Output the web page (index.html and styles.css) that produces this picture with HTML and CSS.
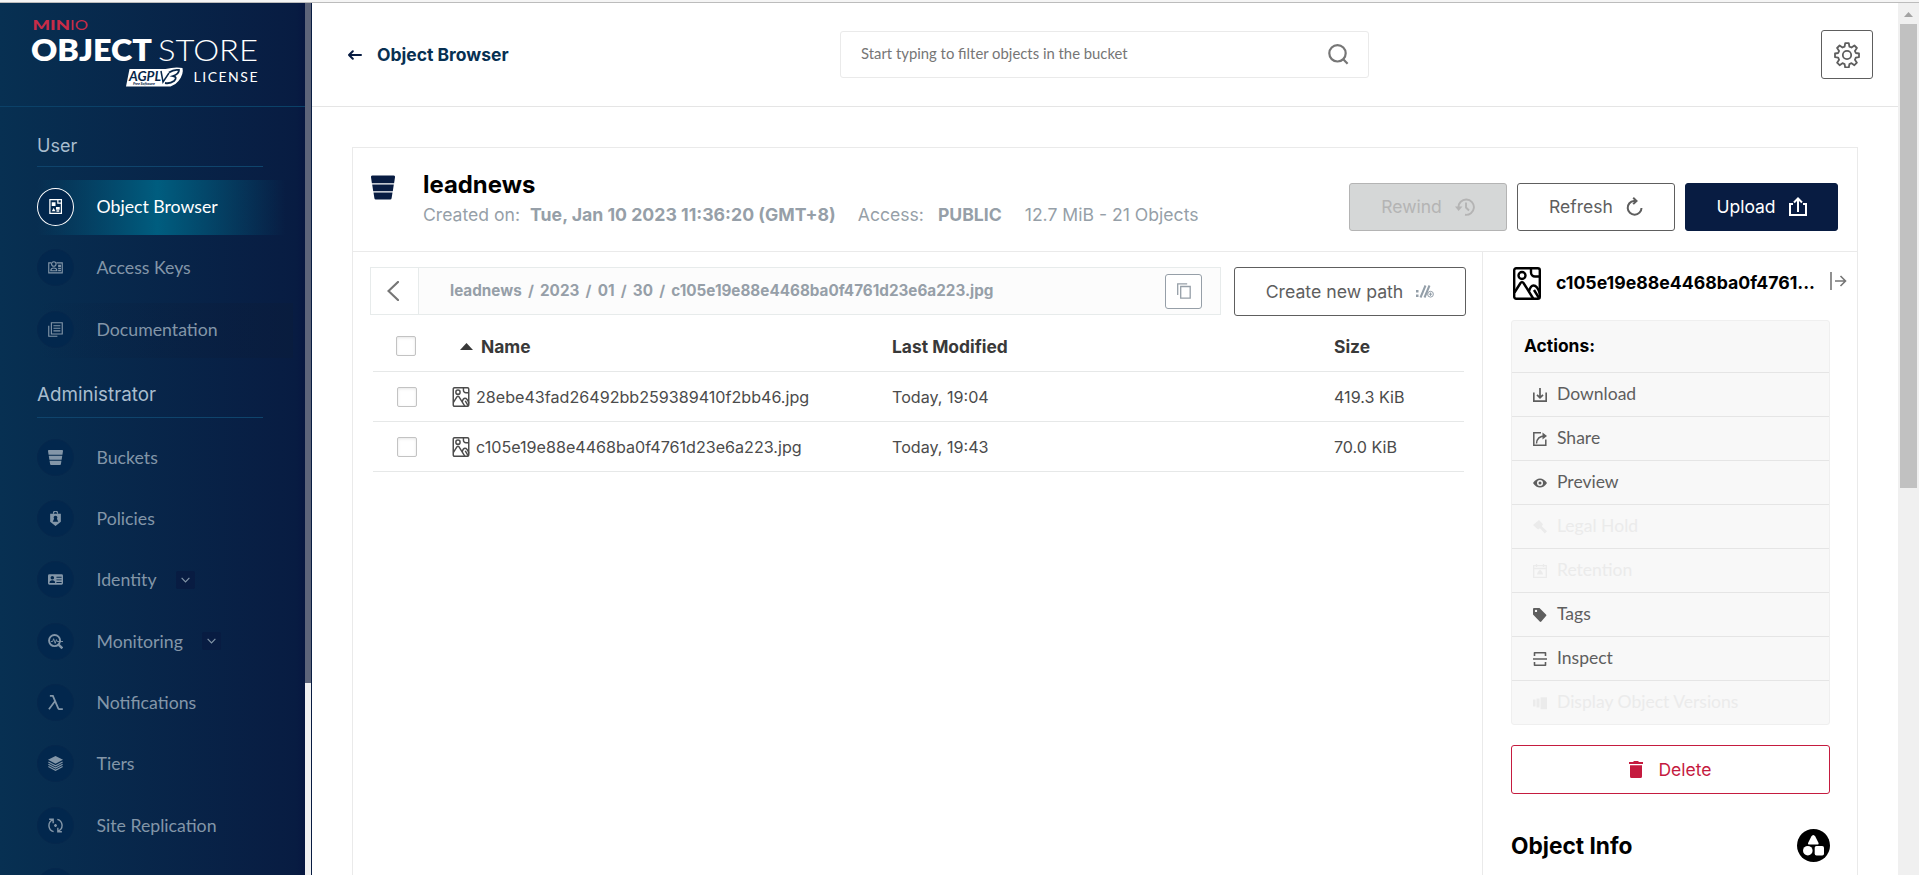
FILE: index.html
```html
<!DOCTYPE html>
<html lang="en">
<head>
  <meta charset="UTF-8" />
  <meta name="viewport" content="width=device-width, initial-scale=1.0"/>
  <title>MinIO Console</title>
  <link rel="stylesheet" href="styles.css">
</head>
<body>

  <!-- Shared icons -->
  <svg class="sprite" xmlns="http://www.w3.org/2000/svg">
    <symbol id="i-bucket" viewBox="0 0 24 24">
      <path fill="currentColor" d="M1.5 0h21A1.5 1.5 0 0 1 24 1.700L23.100 7.700H.9L0 1.700A1.500 1.500 0 0 1 1.500 0zM1.200 9h21.600l-1 6.700H2.200zM2.500 17h19l-.9 5.700A1.500 1.500 0 0 1 19.200 24H4.800a1.500 1.500 0 0 1-1.400-1.300z"/>
    </symbol>
    <symbol id="i-image" viewBox="0 0 28 33">
      <g fill="none" stroke="currentColor" stroke-width="2.400" stroke-linejoin="round">
        <rect x="1.200" y="1.200" width="25.600" height="30.600" rx="2"/>
        <circle cx="9" cy="8.500" r="3.500"/>
        <path d="M18 1v4.500a4 4 0 0 0 4 4h5M1.500 25.500l6-9.500q1.500-1.800 3 0L20.500 32M16 24.500q1.500-6 4.500-6 4 0 6.500 8.500M21 23l5 8"/>
      </g>
    </symbol>
    <symbol id="i-chevron" viewBox="0 0 10 6">
      <path fill="none" stroke="currentColor" stroke-width="1.300" d="M.7.700L5 5 9.300.700"/>
    </symbol>
  </svg>

  <div class="topline"></div>
  <div class="app">

    <!-- Sidebar -->
    <aside class="sidebar">
      <div class="menu">
        <div class="brand">
          <svg class="logo" width="226" height="70" viewBox="0 0 226 70">
            <text class="logo-min" x="0.500" y="13.300" textLength="37.500" lengthAdjust="spacingAndGlyphs">MIN</text>
            <text class="logo-io" x="38" y="13.300" textLength="18" lengthAdjust="spacingAndGlyphs">IO</text>
            <text class="logo-object" x="-1" y="44" textLength="121" lengthAdjust="spacingAndGlyphs">OBJECT</text>
            <text class="logo-store" x="126" y="44" textLength="100" lengthAdjust="spacingAndGlyphs">STORE</text>
            <path fill="#fff" d="M97.500 52h36q10-2.500 17-1 1.500 6-4 13-3 4-8 5.500H94z"/>
            <text class="logo-agpl" x="97" y="64" textLength="32" lengthAdjust="spacingAndGlyphs">AGPL</text>
            <text class="logo-free" x="101" y="68.300" textLength="22">Free Software</text>
            <path fill="none" stroke="#082749" stroke-width="1.500" d="M129 54l2 11 6-9"/>
            <path fill="none" stroke="#082749" stroke-width="1.800" d="M137 55.500q5-3.500 10-2.500 0 4-6 6 5 1 1 5-4 3-9 2"/>
            <text class="logo-license" x="161.500" y="65" textLength="64">LICENSE</text>
          </svg>
        </div>

        <div class="group-label">User</div>
        <a class="item active">
          <span class="bubble"><svg viewBox="0 0 16 16"><path fill="none" stroke="currentColor" stroke-width="1.300" d="M2 .7h12.300v14.600H2zM10.500 1v3.500h3.800"/><path fill="currentColor" d="M4 3.500h4v4H4zM8.500 8.500h4v3h-4zM4 13l2-3.500L8 13zM9 12h3v1.500H9z"/></svg></span>
          Object Browser
        </a>
        <a class="item">
          <span class="bubble"><svg viewBox="0 0 16 16"><g fill="none" stroke="currentColor" stroke-width="1.200"><path d="M3.500 3H.8v10.700h14.400V3H9"/><circle cx="6.200" cy="4.300" r="2.400"/><path d="M3 11.500q0-3 3.200-3t3.200 3z"/></g><path fill="currentColor" d="M10.800 5h3v2.500h-3zM10.800 8.300h3v1.500h-3zM10.800 10.600h3V12h-3z"/></svg></span>
          Access Keys
        </a>
        <a class="item hovered">
          <span class="bubble"><svg viewBox="0 0 16 16"><path fill="none" stroke="currentColor" stroke-width="1.200" d="M3.600.8h11.600v12H3.600zM.8 4v11.200H10M5.800 4h7.400M5.800 6.700h7.400M5.800 9.500h7.400"/></svg></span>
          Documentation
        </a>

        <div class="group-label admin">Administrator</div>
        <a class="item">
          <span class="bubble"><svg><use href="#i-bucket"/></svg></span>
          Buckets
        </a>
        <a class="item">
          <span class="bubble"><svg viewBox="0 0 16 16"><path fill="none" stroke="currentColor" stroke-width="1.200" d="M5.800 3V2.400a2.200 2.200 0 0 1 4.400 0V3"/><path fill="currentColor" fill-rule="evenodd" d="M2.300 3h11.400v8.500L8 16l-5.700-4.500zM8 5a2 2 0 0 0-1.500 3.300L5 11.500h6L9.500 8.300A2 2 0 0 0 8 5z"/></svg></span>
          Policies
        </a>
        <a class="item">
          <span class="bubble"><svg viewBox="0 0 16 16"><path fill="currentColor" fill-rule="evenodd" d="M1.500 2.500h13A1.500 1.500 0 0 1 16 4v8a1.500 1.500 0 0 1-1.500 1.500h-13A1.500 1.500 0 0 1 0 12V4a1.500 1.500 0 0 1 1.500-1.500zM4.600 4.300a1.900 1.900 0 1 0 0 3.800 1.900 1.900 0 0 0 0-3.800zM1.600 11.700h6q0-3-3-3t-3 3zM9 6h5.500v-.9H9zm0 2.800h5.500v-.9H9zm0 2.800h5.500v-.9H9z"/></svg></span>
          Identity
          <span class="toggle"><svg width="9" height="6"><use href="#i-chevron"/></svg></span>
        </a>
        <a class="item">
          <span class="bubble"><svg viewBox="0 0 16 16"><circle cx="7" cy="7" r="5.900" fill="none" stroke="currentColor" stroke-width="2"/><path fill="none" stroke="currentColor" stroke-width="2.600" d="M11 11l4.300 4.300"/><path fill="none" stroke="currentColor" stroke-width="1" d="M3 8h2l1-3 1.700 5L9 6l.8 2H16"/></svg></span>
          Monitoring
          <span class="toggle"><svg width="9" height="6"><use href="#i-chevron"/></svg></span>
        </a>
        <a class="item">
          <span class="bubble"><svg viewBox="0 0 16 16"><path fill="none" stroke="currentColor" stroke-width="1.900" d="M2 .9h3.200l5.600 13.200q.4 1 1.400 1h3.600M7.600 6.300L1 15.200"/></svg></span>
          Notifications
        </a>
        <a class="item">
          <span class="bubble"><svg viewBox="0 0 16 16"><path fill="currentColor" d="M8 0l8 4-8 4.200L0 4z"/><path fill="none" stroke="currentColor" stroke-width="1.200" d="M.4 6.500L8 10.400l7.600-3.900M.4 8.900L8 12.800l7.600-3.900M.4 11.300L8 15.200l7.600-3.900"/></svg></span>
          Tiers
        </a>
        <a class="item">
          <span class="bubble"><svg viewBox="0 0 16 16"><path fill="none" stroke="currentColor" stroke-width="1.500" d="M6 14.600A6.700 6.700 0 0 1 5 2M1.200 1.300H5.500v4.300M10 1.400a6.700 6.700 0 0 1 1 12.600M14.800 14.700h-4.300v-4.300M6.500 8h3M8 6.500v3"/></svg></span>
          Site Replication
        </a>
        <a class="item">
          <span class="bubble"></span>
        </a>
      </div>
      <div class="menu-scroll"><div class="menu-thumb"></div></div>
    </aside>

    <!-- Main area -->
    <main class="main">
      <header class="page-header">
        <div class="back">
          <svg width="14" height="10" viewBox="0 0 14 10"><path fill="none" stroke="#081c42" stroke-width="2" stroke-linecap="round" stroke-linejoin="round" d="M4.800 1.200L1 5l3.800 3.800M1 5h12"/></svg>
          <span>Object Browser</span>
        </div>
        <div class="search">
          <span>Start typing to filter objects in the bucket</span>
          <svg width="21" height="21" viewBox="0 0 21 21"><g fill="none" stroke="#767676" stroke-width="2.200"><circle cx="9.500" cy="9.300" r="8.200"/><path d="M15 15l4.600 4.800"/></g></svg>
        </div>
        <button class="gear">
          <svg width="26" height="26" viewBox="0 0 26 26"><g fill="none" stroke="#5e5e5e" stroke-width="1.800" stroke-linejoin="round"><circle cx="13" cy="13" r="4.200"/><path d="M11.200 1.200h3.600l.6 3.400 2.100.9 2.900-2 2.500 2.500-2 2.900.9 2.100 3.200.5v3.700l-3.200.5-.9 2.100 2 2.900-2.500 2.500-2.900-2-2.100.9-.6 3.400h-3.600l-.6-3.400-2.100-.9-2.900 2-2.500-2.500 2-2.900-.9-2.100-3.200-.5v-3.700l3.200-.5.9-2.100-2-2.900 2.500-2.500 2.900 2 2.100-.9z"/></g></svg>
        </button>
      </header>

      <section class="card">
        <div class="bucket-head">
          <svg class="bucket-icon" width="24" height="25"><use href="#i-bucket"/></svg>
          <div class="bucket-info">
            <h1>leadnews</h1>
            <p><span>Created on:</span><b class="date">Tue, Jan 10 2023 11:36:20 (GMT+8)</b><span class="access">Access:</span><b class="public">PUBLIC</b><span class="usage">12.7 MiB - 21 Objects</span></p>
          </div>
          <div class="bucket-actions">
            <button class="btn disabled">Rewind
              <svg width="20" height="18" viewBox="0 0 20 18"><g fill="none" stroke="currentColor" stroke-width="1.900"><path d="M3.500 9.500a7.700 7.700 0 1 1 6.500 7.300M11 4.500v5l3 3"/></g><path fill="currentColor" d="M0 8.500h7.500L3.600 13z"/></svg>
            </button>
            <button class="btn">Refresh
              <svg width="17" height="19" viewBox="0 0 17 19"><g fill="none" stroke="currentColor" stroke-width="2"><path d="M9.500 3.900H8a6.900 6.900 0 1 0 7.500 7"/><path d="M7.200.8l3.300 3.100-3.300 3.200"/></g></svg>
            </button>
            <button class="btn primary">Upload
              <svg width="18" height="19" viewBox="0 0 18 19"><path fill="none" stroke="currentColor" stroke-width="2" d="M4 7H1v11h16V7h-3M9 15V2M5 5.500l4-4 4 4"/></svg>
            </button>
          </div>
        </div>

        <div class="card-body">
          <div class="objects">
            <div class="path-row">
              <div class="breadcrumb">
                <span class="up"><svg width="12" height="20" viewBox="0 0 12 20"><path fill="none" stroke="#767676" stroke-width="2.200" stroke-linecap="round" d="M11 1L1.500 10 11 19"/></svg></span>
                <span class="crumbs">leadnews<i>/</i>2023<i>/</i>01<i>/</i>30<i>/</i>c105e19e88e4468ba0f4761d23e6a223.jpg</span>
                <button class="copy"><svg width="14" height="16" viewBox="0 0 14 16"><path fill="none" stroke="currentColor" stroke-width="1.300" d="M.7 12V.8h9.500M3.700 3.500h9.500v11.600H3.700z"/></svg></button>
              </div>
              <button class="btn new-path">Create new path
                <svg width="18" height="13" viewBox="0 0 18 13"><g fill="none" stroke="#939ea8" stroke-width="2"><path d="M4.500 12.500L9.500.5M8.500 12.500L13.500.5"/><circle cx="14.500" cy="9.200" r="2.900" stroke-width="1"/><path stroke-width="1" d="M14.500 7.500v3.400M12.800 9.200h3.400"/></g><path fill="#939ea8" d="M0 5h2.500v2.500H0zM0 9.500h2.500V12H0z"/></svg>
              </button>
            </div>

            <div class="table">
              <div class="row head">
                <span class="check"></span>
                <span class="name"><svg width="13" height="7" viewBox="0 0 13 7"><path fill="#393939" d="M0 7L6.500 0 13 7z"/></svg>Name</span>
                <span>Last Modified</span>
                <span>Size</span>
              </div>
              <div class="row">
                <span class="check"></span>
                <span class="name"><svg width="18" height="20"><use href="#i-image"/></svg>28ebe43fad26492bb259389410f2bb46.jpg</span>
                <span>Today, 19:04</span>
                <span>419.3 KiB</span>
              </div>
              <div class="row">
                <span class="check"></span>
                <span class="name"><svg width="18" height="20"><use href="#i-image"/></svg>c105e19e88e4468ba0f4761d23e6a223.jpg</span>
                <span>Today, 19:43</span>
                <span>70.0 KiB</span>
              </div>
            </div>
          </div>

          <!-- Object details -->
          <aside class="details">
            <div class="details-head">
              <svg width="28" height="33"><use href="#i-image"/></svg>
              <strong>c105e19e88e4468ba0f4761...</strong>
              <svg class="collapse" width="17" height="18" viewBox="0 0 17 18"><path fill="none" stroke="#767676" stroke-width="1.600" d="M1 0v18M5 9h10.500M10.500 4l5 5-5 5"/></svg>
            </div>

            <ul class="actions">
              <li class="title">Actions:</li>
              <li><svg viewBox="0 0 14 14"><path fill="none" stroke="currentColor" stroke-width="1.700" d="M.8 4.500v8.700h12.400V4.500M7 0v9.500M4 6.800l3 3 3-3"/></svg>Download</li>
              <li><svg viewBox="0 0 14 14"><path fill="none" stroke="currentColor" stroke-width="1.500" d="M8 .8H.8v12.400h12V7.500M3.500 11.500q.5-7.500 8.500-7.500"/><path fill="currentColor" d="M9.500.5L14 4 9.500 7.500z"/></svg>Share</li>
              <li><svg viewBox="0 0 14 14"><path fill="currentColor" fill-rule="evenodd" d="M0 7q3-4.500 7-4.500T14 7q-3 4.500-7 4.500T0 7zm7-3a3 3 0 1 0 0 6 3 3 0 0 0 0-6zm0 1.500a1.500 1.500 0 1 1 0 3 1.500 1.500 0 0 1 0-3z"/></svg>Preview</li>
              <li class="off"><svg viewBox="0 0 14 14"><path fill="currentColor" d="M6 0l4 4.200L8.800 6.200l5.200 5-2.200 2.300L7 8.200 5 9.500 0 5z"/></svg>Legal Hold</li>
              <li class="off"><svg viewBox="0 0 14 14"><path fill="none" stroke="currentColor" stroke-width="1.300" d="M.7 1.700h12.600v11.600H.7zM.7 4.500h12.600M3.500 0v3M10.500 0v3"/><path fill="currentColor" d="M7 5.500q3 2.500 3 5H4q0-2.500 3-5z"/></svg>Retention</li>
              <li><svg viewBox="0 0 14 14"><path fill="currentColor" fill-rule="evenodd" d="M0 1a1 1 0 0 1 1-1h5.500L13 6.500q.8.800 0 1.600L8.300 13.500q-.8.800-1.600 0L0 6.500zm3 .7a1.200 1.200 0 1 0 0 2.400 1.200 1.200 0 0 0 0-2.400z"/></svg>Tags</li>
              <li><svg viewBox="0 0 14 14"><path fill="none" stroke="currentColor" stroke-width="1.600" d="M1.500 4V.8h11V4M1.500 10v3.200h11V10M0 7h14" stroke-linejoin="round"/></svg>Inspect</li>
              <li class="off"><svg viewBox="0 0 14 14"><path fill="currentColor" d="M0 3.500h2.500v7H0zM3.500 2.500H6.500v9h-3zM7.500 1.200H14v12H7.500z"/></svg>Display Object Versions</li>
            </ul>

            <button class="btn delete">
              <svg width="14" height="17" viewBox="0 0 14 17"><path fill="currentColor" d="M0 1h4.500V0h5v1H14v2H0zM1 4.200h12V15.500q0 1.500-1.500 1.500h-9Q1 17 1 15.500z"/></svg>
              Delete
            </button>

            <div class="info-head">
              <h2>Object Info</h2>
              <svg width="33" height="33" viewBox="0 0 33 33"><circle cx="16.500" cy="16.500" r="16.500"/><g fill="#fff"><path d="M16.300 6q1.200 0 2 1.500l3 6q1 2-1 2h-8q-2 0-1-2l3-6q.8-1.500 2-1.500z"/><circle cx="10.800" cy="21.700" r="4.800"/><rect x="17.700" y="17" width="9.300" height="9.500" rx="1.800"/></g></svg>
            </div>
          </aside>
        </div>
      </section>
    </main>

    <div class="page-scroll">
      <svg width="9" height="5" viewBox="0 0 9 5"><path fill="#a3a3a3" d="M0 5L4.500 0 9 5z"/></svg>
      <div class="page-thumb"></div>
    </div>
  </div>

</body>
</html>
```

FILE: styles.css
```css
* { box-sizing: border-box; }
body {
  margin: 0;
  height: 100vh;
  overflow: hidden;
  font-family: Inter, "Liberation Sans", sans-serif;
  font-size: 17.5px;
  color: #000;
  background: #fff;
}
svg { display: block; flex: none; }
button { font: inherit; }
.sprite { display: none; }
.topline {
  height: 3px;
  background: #f5f5f5;
  border-bottom: 1px solid #bcbcbc;
}
.app {
  display: flex;
  height: calc(100vh - 3px);
}

/* Sidebar */
.sidebar {
  display: flex;
  width: 312px;
  flex: none;
  border-right: 1px solid #081c42;
}
.menu {
  width: 305px;
  overflow: hidden;
  background: linear-gradient(90deg, #073052 0%, #081c42 97%, #071740 100%);
}
.menu-scroll { width: 6px; background: #f0f0f0; }
.menu-thumb { height: 680px; background: #5d6479; }
.brand {
  height: 104px;
  padding: 14px 0 0 32px;
  border-bottom: 1px solid #0b4168;
}
.logo { overflow: visible; fill: #fff; font-family: Lato, sans-serif; }
.logo-min { font-size: 12.5px; font-weight: 900; fill: #c72c48; }
.logo-io { font-size: 12.5px; font-weight: 400; fill: #c72c48; }
.logo-object { font-size: 30px; font-weight: 800; }
.logo-store { font-size: 30px; font-weight: 300; }
.logo-agpl { font-size: 14px; font-style: italic; font-weight: 700; fill: #082749; }
.logo-free { font-size: 4px; font-style: italic; font-weight: 700; fill: #082749; }
.logo-license { font-size: 14px; }
.group-label {
  height: 60px;
  margin: 0 42px 12px 37px;
  padding-top: 16px;
  display: flex;
  align-items: center;
  font-size: 18px;
  color: #a9bdce;
  border-bottom: 1px solid #0f446c;
}
.group-label.admin { font-size: 18.8px; padding-top: 15px; }
.brand + .group-label { margin-bottom: 13px; padding-top: 17px; }
.item {
  display: flex;
  align-items: center;
  height: 55.33px;
  margin: 0 12px 6px 36.5px;
  padding-bottom: 1px;
  font-family: Lato, sans-serif;
  font-size: 17.7px;
  color: #8396a8;
}
.brand ~ .item.active, .brand ~ .item.active + .item { padding-bottom: 2px; }
.item:has(+ .group-label) { margin-bottom: 0; }
.item.active {
  color: #fff;
  background: linear-gradient(90deg, rgba(0, 93, 127, 0) 0%, #005d7f 47%, rgba(0, 93, 127, 0) 97%);
}
.item.hovered { background: linear-gradient(90deg, transparent, rgba(10, 28, 58, .5)); }
.bubble {
  display: flex;
  align-items: center;
  justify-content: center;
  width: 37px;
  height: 37px;
  margin-right: 23px;
  border: 1px solid #06274c;
  border-radius: 50%;
  background: #02274d;
}
.bubble svg { width: 15px; height: 15px; }
.active .bubble { height: 38px; border-color: #fff; }
.toggle {
  display: flex;
  align-items: center;
  justify-content: center;
  width: 19px;
  height: 18px;
  margin-left: 19px;
  border-radius: 2px;
  background: #081c42;
}

/* Header */
.main { flex: 1; min-width: 0; overflow: hidden; }
.page-header {
  display: flex;
  align-items: center;
  height: 104px;
  padding: 0 25px 0 36px;
  border-bottom: 1px solid #e5e5e5;
}
.back {
  display: flex;
  align-items: center;
  gap: 15px;
  width: 492px;
  font-weight: 700;
  font-size: 17.5px;
  color: #073052;
}
.search {
  display: flex;
  align-items: center;
  justify-content: space-between;
  width: 529px;
  height: 47px;
  padding: 0 19px 0 20px;
  border: 1px solid #eaeaea;
  border-radius: 3px;
  font-family: Lato, sans-serif;
  font-size: 14.85px;
  color: #767676;
}
.search span { padding-bottom: 3px; }
.gear {
  display: flex;
  align-items: center;
  justify-content: center;
  width: 52px;
  height: 49px;
  margin-left: auto;
  padding: 0;
  border: 1px solid #5e5e5e;
  border-radius: 3px;
  background: #fff;
}

/* Bucket card */
.card {
  height: 800px;
  margin: 40px 40px 0;
  border: 1px solid #eaeaea;
}
.bucket-head {
  display: flex;
  height: 104px;
  padding: 0 19px 0 18px;
  border-bottom: 1px solid #eaeaea;
}
.bucket-icon { margin-top: 27px; color: #081c42; }
.bucket-info { margin-left: 28px; padding-top: 23px; }
.bucket-info h1 { margin: 0; font-size: 23.9px; line-height: 28px; }
.bucket-info p {
  display: flex;
  margin: 4px 0 0;
  font-size: 17.6px;
  line-height: 24px;
  color: #969fa8;
  white-space: nowrap;
}
.date { margin-left: 10px; font-size: 17.7px; }
.access { margin-left: 22px; }
.public { margin-left: 14px; }
.usage { margin-left: 23px; }
.bucket-actions {
  display: flex;
  gap: 10px;
  margin: 35px 0 0 auto;
}
.btn {
  display: flex;
  align-items: center;
  justify-content: center;
  gap: 13px;
  width: 158px;
  height: 48px;
  padding: 0 0 1px;
  border: 1px solid #5e5e5e;
  border-radius: 3px;
  background: #fff;
  color: #5e5e5e;
  white-space: nowrap;
}
.btn.disabled { background: #d5d7d7; border-color: #b4b4b4; color: #b4b4b4; }
.btn.primary { width: 153px; background: #081c42; border-color: #081c42; color: #fff; }

.card-body { display: flex; height: 694px; }
.objects { flex: 1; padding: 15px 16px 0 17px; }
.path-row { display: flex; justify-content: space-between; }
.breadcrumb {
  display: flex;
  align-items: center;
  width: 851px;
  height: 48px;
  padding-right: 18px;
  border: 1px solid #e7ebeb;
  background: #fcfcfc;
}
.up {
  display: flex;
  align-items: center;
  justify-content: center;
  width: 48px;
  height: 46px;
  padding-right: 3px;
  border-right: 1px solid #e7ebeb;
  background: #fff;
}
.crumbs {
  margin-left: 31px;
  padding-bottom: 1px;
  font-size: 15.25px;
  font-weight: 700;
  color: #969fa8;
}
.crumbs i { margin: 0 6.2px; font-style: normal; }
.copy {
  display: flex;
  align-items: center;
  justify-content: center;
  width: 37px;
  height: 35px;
  margin-left: auto;
  padding: 0;
  border: 1px solid #969fa8;
  border-radius: 3px;
  background: #fff;
  color: #969fa8;
}
.new-path { width: 232px; height: 49px; padding-bottom: 0; font-size: 17.7px; }

/* Objects table */
.table { margin: 0 2px 0 3px; }
.row {
  display: grid;
  grid-template-columns: 79px 440px 442px 1fr;
  align-items: center;
  height: 50px;
  border-bottom: 1px solid #e6e8e8;
  font-size: 16.13px;
  color: #4b4b4b;
}
.row.head {
  height: 56px;
  padding-top: 5px;
  font-size: 17.4px;
  font-weight: 700;
  color: #393939;
}
.check {
  width: 20px;
  height: 20px;
  margin-left: 24px;
  border: 1px solid #c3c3c3;
  border-radius: 2px;
  box-shadow: inset 0 1px 3px rgba(0, 0, 0, .1);
}
.head .check { margin-left: 23px; }
.name { display: flex; align-items: center; gap: 6px; }
.head .name { padding-left: 8px; gap: 8px; }

/* Details panel */
.details {
  width: 375px;
  padding: 15px 27px 0 28px;
  border-left: 1px solid #eaeaea;
}
.details-head { display: flex; align-items: center; height: 33px; margin-right: -18px; padding-left: 2px; }
.details-head strong {
  width: 260px;
  margin-left: 15px;
  padding-bottom: 2px;
  white-space: nowrap;
  font-size: 17.7px;
}
.collapse { margin: -6px 0 0 14px; }
.actions {
  list-style: none;
  margin: 20px 0 0;
  padding: 0;
  width: 319px;
  border: 1px solid #efefef;
  border-radius: 3px;
  background: #f8f8f8;
}
.actions li {
  display: flex;
  align-items: center;
  gap: 10px;
  height: 44px;
  padding: 0 0 2px 21px;
  border-top: 1px solid #e5e5e5;
  font-family: Lato, sans-serif;
  font-size: 17.55px;
  color: #5e5e5e;
}
.actions li svg { width: 14px; height: 14px; margin-top: 3px; }
.actions .title {
  height: 51px;
  padding-left: 12px;
  border-top: 0;
  font-family: Inter, sans-serif;
  font-size: 17.4px;
  font-weight: 700;
  color: #000;
}
.actions .off { color: #ebebeb; }
.btn.delete {
  width: 319px;
  height: 49px;
  margin-top: 20px;
  padding-bottom: 0;
  gap: 15px;
  border-color: #c51b3f;
  color: #c51b3f;
}
.info-head {
  display: flex;
  align-items: center;
  justify-content: space-between;
  width: 319px;
  margin-top: 35px;
}
.info-head h2 { margin: 0; font-size: 22.7px; }

/* Page scrollbar */
.page-scroll {
  width: 21px;
  padding: 9px 2px 0;
  background: #f0f0f0;
}
.page-scroll svg { margin: 0 auto 7px; }
.page-thumb { height: 464px; background: #c1c1c1; }
```
